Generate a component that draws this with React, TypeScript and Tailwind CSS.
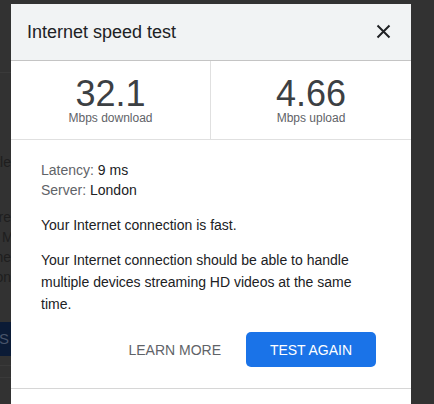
import React from "react";

export default function App() {
  return (
    <div className="w-[434px] h-[404px] bg-[#323232] flex overflow-hidden font-['Liberation_Sans',Arial,sans-serif]">
      {/* page behind, seen through overlay */}
      <div className="w-[11px] shrink-0 overflow-hidden flex flex-col text-[14px] leading-[20px] text-[#1e1e1e]">
        <div className="h-[73px] border-b border-[#3a3a3a] shrink-0" />
        <div className="mt-[79px] flex justify-end whitespace-nowrap">Title</div>
        <div className="mt-[35px] flex justify-end whitespace-nowrap">quire</div>
        <div className="flex justify-start whitespace-nowrap ml-[2px]">Mo</div>
        <div className="flex justify-end whitespace-nowrap">the</div>
        <div className="flex justify-end whitespace-nowrap">on</div>
        <div className="mt-[35px] h-[34px] shrink-0 bg-[#0b1b36] text-[#48546a] flex items-center whitespace-nowrap text-[15px]">
          <span className="ml-[-1px]">S</span>
        </div>
        <div className="mt-[9px] border-t border-[#3a3a3a] h-[13px] border-b shrink-0" />
      </div>

      {/* dialog */}
      <div className="w-[400px] shrink-0 mt-[4px] bg-white flex flex-col">
        <div className="h-[57px] shrink-0 bg-[#f1f3f4] border-b border-[#c4c4c4] flex items-center justify-between pl-[16px] pr-[20px]">
          <span className="text-[18px] leading-[24px] text-[#202124]">Internet speed test</span>
          <svg width="15" height="15" viewBox="0 0 15 15" className="mt-[-2px]">
            <path d="M1.5 1.5 L13.5 13.5 M13.5 1.5 L1.5 13.5" stroke="#202124" strokeWidth="2" fill="none" />
          </svg>
        </div>

        <div className="grid grid-cols-2 h-[79px] shrink-0 border-b border-[#e0e0e0]">
          <div className="flex flex-col items-center pt-[16px] border-r border-[#e0e0e0]">
            <span className="text-[36px] leading-[33px] text-[#3c4043]">32.1</span>
            <span className="text-[12px] leading-[16px] text-[#5f6368]">Mbps download</span>
          </div>
          <div className="flex flex-col items-center pt-[16px]">
            <span className="text-[36px] leading-[33px] text-[#3c4043]">4.66</span>
            <span className="text-[12px] leading-[16px] text-[#5f6368]">Mbps upload</span>
          </div>
        </div>

        <div className="pl-[30px] pr-[30px] pt-[20px] text-[14px] text-[#202124]">
          <div className="leading-[20px]">
            <div>
              <span className="text-[#5f6368]">Latency:</span> 9 ms
            </div>
            <div>
              <span className="text-[#5f6368]">Server:</span> London
            </div>
          </div>
          <p className="leading-[22px] mt-[14px]">Your Internet connection is fast.</p>
          <p className="leading-[22px] mt-[13px]">
            Your Internet connection should be able to handle multiple devices streaming HD videos at the same time.
          </p>
        </div>

        <div className="flex justify-end items-center pr-[35px] mt-[17px] gap-[25px]">
          <button className="text-[14px] leading-[20px] text-[#5f6368] uppercase">Learn more</button>
          <button className="w-[130px] h-[35px] rounded-[5px] bg-[#1a73e8] text-white text-[14px] leading-[20px] uppercase flex items-center justify-center">
            Test again
          </button>
        </div>

        <div className="mt-[21px] border-t border-[#d6d6d6]" />
        <div className="flex-1 bg-white" />
      </div>

      <div className="flex-1" />
    </div>
  );
}
